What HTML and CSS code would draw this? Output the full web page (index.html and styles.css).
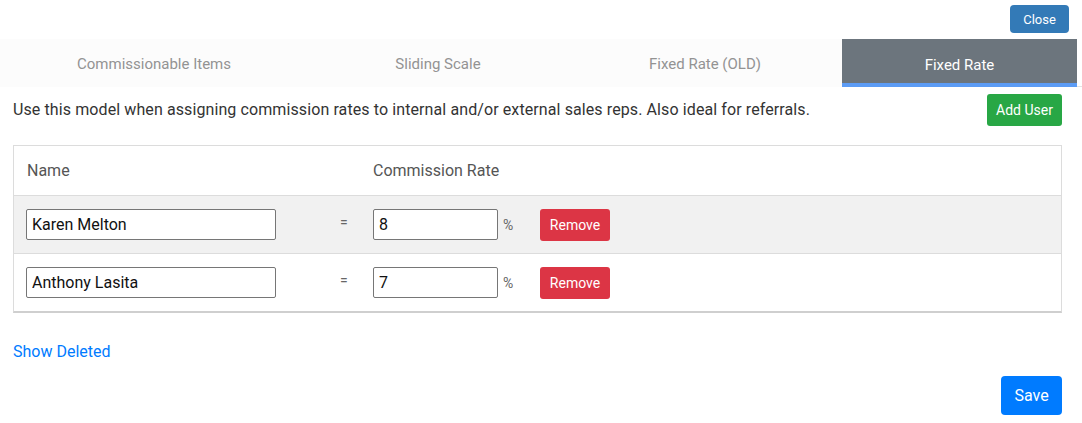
FILE: index.html
```html
<!DOCTYPE html>
<html>
<head>
<meta charset="utf-8">
<link rel="stylesheet" href="styles.css">
</head>
<body>
<div class="page">
  <div class="topbar">
    <button class="btn btn-close">Close</button>
  </div>
  <nav class="tabs">
    <div class="tab">Commissionable Items</div>
    <div class="tab">Sliding Scale</div>
    <div class="tab">Fixed Rate (OLD)</div>
    <div class="tab active">Fixed Rate</div>
  </nav>
  <div class="content">
    <div class="intro">
      <p class="desc">Use this model when assigning commission rates to internal and/or external sales reps. Also ideal for referrals.</p>
      <button class="btn btn-add">Add User</button>
    </div>
    <div class="table">
      <div class="row head">
        <div class="c-name">Name</div>
        <div class="c-eq"></div>
        <div class="c-rate">Commission Rate</div>
      </div>
      <div class="row odd">
        <div class="c-name"><input class="inp inp-name" type="text" value="Karen Melton"></div>
        <div class="c-eq">=</div>
        <div class="c-rate"><input class="inp inp-rate" type="text" value="8"><span class="pct">%</span><button class="btn btn-remove">Remove</button></div>
      </div>
      <div class="row">
        <div class="c-name"><input class="inp inp-name" type="text" value="Anthony Lasita"></div>
        <div class="c-eq">=</div>
        <div class="c-rate"><input class="inp inp-rate" type="text" value="7"><span class="pct">%</span><button class="btn btn-remove">Remove</button></div>
      </div>
    </div>
    <a class="show-deleted" href="#">Show Deleted</a>
    <div class="footer">
      <button class="btn btn-save">Save</button>
    </div>
  </div>
</div>
</body>
</html>
```
FILE: styles.css
```css
* { box-sizing: border-box; }
html, body { margin: 0; padding: 0; background: #fff; }
body { font-family: Roboto, "Liberation Sans", sans-serif; color: #212529; }
.page { width: 1077px; }
.btn {
  font-family: Roboto, "Liberation Sans", sans-serif;
  border: none; color: #fff; cursor: pointer; padding: 0;
}
.topbar { display: flex; justify-content: flex-end; height: 39px; padding: 5px 8px 0 0; }
.btn-close { width: 59px; height: 28px; background: #337ab7; border-radius: 4px; font-size: 13px; }
.tabs {
  display: grid;
  grid-template-columns: 308fr 260fr 274fr 235fr;
  height: 48px;
  background: #fcfcfc;
  position: relative;
}
.tabs::after {
  content: ""; position: absolute; left: 1077px; bottom: 0; width: 5px; height: 1px; background: #e3e3e3;
}
.tab {
  display: flex; align-items: center; justify-content: center;
  font-size: 15px; color: #939393; padding-top: 1px;
}
.tab.active {
  background: #6c757d; color: #fff;
  border-bottom: 4px solid #5c9cf5;
  padding-top: 8px;
}
.content { padding: 7px 15px 0 13px; }
.intro { display: flex; justify-content: space-between; align-items: flex-start; }
.desc { margin: 6px 0 0; font-size: 16px; color: #333; line-height: 19px; letter-spacing: 0.1px; }
.btn-add { width: 75px; height: 32px; background: #28a745; border-radius: 3px; font-size: 14px; margin-right: 0; }
.table {
  margin-top: 19px;
  border: 1px solid #dcdcdc;
  border-bottom: 2px solid #cfcfcf;
}
.row { display: flex; align-items: center; height: 58px; border-top: 1px solid #dcdcdc; }
.row.head { height: 49px; border-top: none; font-size: 16px; color: #555; }
.row.odd { background: #f1f1f1; }
.c-name { width: 317px; padding-left: 12px; }
.c-eq { width: 42px; text-align: left; padding-left: 9px; font-size: 14px; color: #666; padding-bottom: 6px; }
.row.head .c-name { padding-left: 13px; }
.c-rate { display: flex; align-items: center; }
.inp {
  font-family: Roboto, "Liberation Sans", sans-serif;
  font-size: 16px; color: #111;
  height: 31px; border: 1px solid #767676; border-radius: 2px;
  padding: 0 5px; background: #fff; outline: none;
}
.inp-name { width: 250px; }
.inp-rate { width: 125px; }
.pct { font-size: 14px; color: #666; margin-left: 5px; width: 37px; }
.btn-remove { width: 70px; height: 32px; background: #dc3545; border-radius: 3px; font-size: 14px; }
.show-deleted { display: inline-block; margin-top: 29px; font-size: 16px; color: #007bff; text-decoration: none; line-height: 19px; }
.footer { display: flex; justify-content: flex-end; margin-top: 15px; }
.btn-save { width: 61px; height: 39px; background: #007bff; border-radius: 4px; font-size: 16px; }
```
